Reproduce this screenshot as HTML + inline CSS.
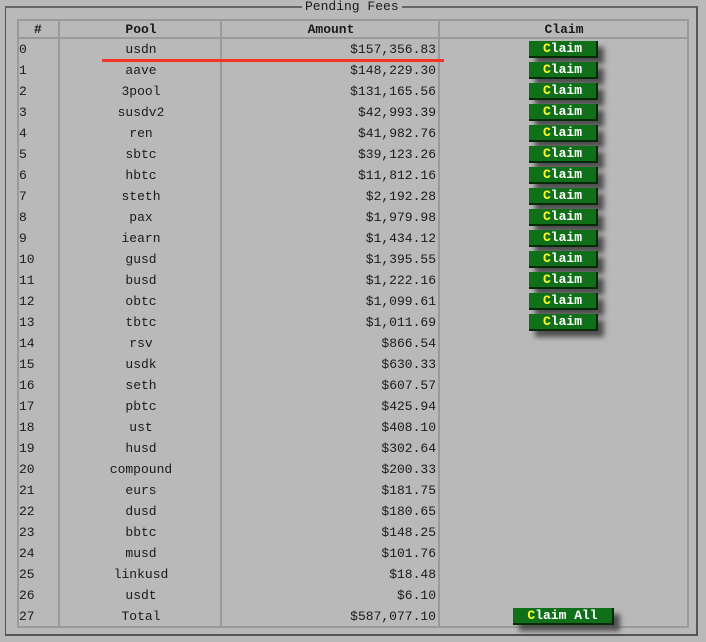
<!DOCTYPE html>
<html><head><meta charset="utf-8"><style>
html,body{margin:0;padding:0;background:#b9b9b9;width:706px;height:642px;overflow:hidden;font-family:"Liberation Mono",monospace;font-size:13px;color:#1a1a1a;}
.abs{position:absolute}
#outer{left:5px;top:6px;width:693px;height:630px;border-top:2px solid #666;border-right:2px solid #555;border-left:1px solid #555;border-bottom:2px solid #555;box-sizing:border-box}
#legend{left:302px;top:0;background:#b9b9b9;padding:0 3px;line-height:13px}
#tbl{left:17px;top:19px;width:672px;height:609px;border:2px solid #9a9a9a;box-sizing:border-box}
.vl{position:absolute;top:19px;width:2px;height:609px;background:#9a9a9a}
.hl{position:absolute;left:17px;top:37px;width:672px;height:2px;background:#9a9a9a}
.row{position:absolute;left:0;width:706px;height:21px;line-height:21px}
.c0{position:absolute;left:19px}
.c1{position:absolute;left:61px;width:160px;text-align:center}
.c2{position:absolute;left:223px;width:213px;text-align:right}
.hd{font-weight:bold}
.btn{position:absolute;left:529px;top:2px;width:69px;height:17px;background:#10701a;border-right:2px solid #052a08;border-bottom:2px solid #052a08;box-sizing:border-box;color:#fff;font-weight:bold;text-align:center;line-height:16px;box-shadow:6px 6px 5px #505050}
.btn b{color:#ffff20}
#red{left:102px;top:59px;width:342px;height:3px;background:#f33324}
</style></head><body>
<div id="outer" class="abs"></div>
<div id="legend" class="abs">Pending Fees</div>
<div id="tbl" class="abs"></div>
<div class="vl" style="left:58px"></div>
<div class="vl" style="left:220px"></div>
<div class="vl" style="left:438px"></div>
<div class="hl"></div>
<div class="row hd" style="top:19px"><span class="c0" style="left:34px">#</span><span class="c1">Pool</span><span class="c2" style="width:216px;text-align:center">Amount</span><span style="position:absolute;left:440px;width:248px;text-align:center">Claim</span></div>

<div class="row" style="top:39px"><span class="c0">0</span><span class="c1">usdn</span><span class="c2">$157,356.83</span><div class="btn"><b>C</b>laim</div></div>
<div class="row" style="top:60px"><span class="c0">1</span><span class="c1">aave</span><span class="c2">$148,229.30</span><div class="btn"><b>C</b>laim</div></div>
<div class="row" style="top:81px"><span class="c0">2</span><span class="c1">3pool</span><span class="c2">$131,165.56</span><div class="btn"><b>C</b>laim</div></div>
<div class="row" style="top:102px"><span class="c0">3</span><span class="c1">susdv2</span><span class="c2">$42,993.39</span><div class="btn"><b>C</b>laim</div></div>
<div class="row" style="top:123px"><span class="c0">4</span><span class="c1">ren</span><span class="c2">$41,982.76</span><div class="btn"><b>C</b>laim</div></div>
<div class="row" style="top:144px"><span class="c0">5</span><span class="c1">sbtc</span><span class="c2">$39,123.26</span><div class="btn"><b>C</b>laim</div></div>
<div class="row" style="top:165px"><span class="c0">6</span><span class="c1">hbtc</span><span class="c2">$11,812.16</span><div class="btn"><b>C</b>laim</div></div>
<div class="row" style="top:186px"><span class="c0">7</span><span class="c1">steth</span><span class="c2">$2,192.28</span><div class="btn"><b>C</b>laim</div></div>
<div class="row" style="top:207px"><span class="c0">8</span><span class="c1">pax</span><span class="c2">$1,979.98</span><div class="btn"><b>C</b>laim</div></div>
<div class="row" style="top:228px"><span class="c0">9</span><span class="c1">iearn</span><span class="c2">$1,434.12</span><div class="btn"><b>C</b>laim</div></div>
<div class="row" style="top:249px"><span class="c0">10</span><span class="c1">gusd</span><span class="c2">$1,395.55</span><div class="btn"><b>C</b>laim</div></div>
<div class="row" style="top:270px"><span class="c0">11</span><span class="c1">busd</span><span class="c2">$1,222.16</span><div class="btn"><b>C</b>laim</div></div>
<div class="row" style="top:291px"><span class="c0">12</span><span class="c1">obtc</span><span class="c2">$1,099.61</span><div class="btn"><b>C</b>laim</div></div>
<div class="row" style="top:312px"><span class="c0">13</span><span class="c1">tbtc</span><span class="c2">$1,011.69</span><div class="btn"><b>C</b>laim</div></div>
<div class="row" style="top:333px"><span class="c0">14</span><span class="c1">rsv</span><span class="c2">$866.54</span></div>
<div class="row" style="top:354px"><span class="c0">15</span><span class="c1">usdk</span><span class="c2">$630.33</span></div>
<div class="row" style="top:375px"><span class="c0">16</span><span class="c1">seth</span><span class="c2">$607.57</span></div>
<div class="row" style="top:396px"><span class="c0">17</span><span class="c1">pbtc</span><span class="c2">$425.94</span></div>
<div class="row" style="top:417px"><span class="c0">18</span><span class="c1">ust</span><span class="c2">$408.10</span></div>
<div class="row" style="top:438px"><span class="c0">19</span><span class="c1">husd</span><span class="c2">$302.64</span></div>
<div class="row" style="top:459px"><span class="c0">20</span><span class="c1">compound</span><span class="c2">$200.33</span></div>
<div class="row" style="top:480px"><span class="c0">21</span><span class="c1">eurs</span><span class="c2">$181.75</span></div>
<div class="row" style="top:501px"><span class="c0">22</span><span class="c1">dusd</span><span class="c2">$180.65</span></div>
<div class="row" style="top:522px"><span class="c0">23</span><span class="c1">bbtc</span><span class="c2">$148.25</span></div>
<div class="row" style="top:543px"><span class="c0">24</span><span class="c1">musd</span><span class="c2">$101.76</span></div>
<div class="row" style="top:564px"><span class="c0">25</span><span class="c1">linkusd</span><span class="c2">$18.48</span></div>
<div class="row" style="top:585px"><span class="c0">26</span><span class="c1">usdt</span><span class="c2">$6.10</span></div>
<div class="row" style="top:606px"><span class="c0">27</span><span class="c1">Total</span><span class="c2">$587,077.10</span><div class="btn" style="left:513px;width:101px;top:2px"><b>C</b>laim All</div></div>
<div id="red" class="abs"></div>
</body></html>
